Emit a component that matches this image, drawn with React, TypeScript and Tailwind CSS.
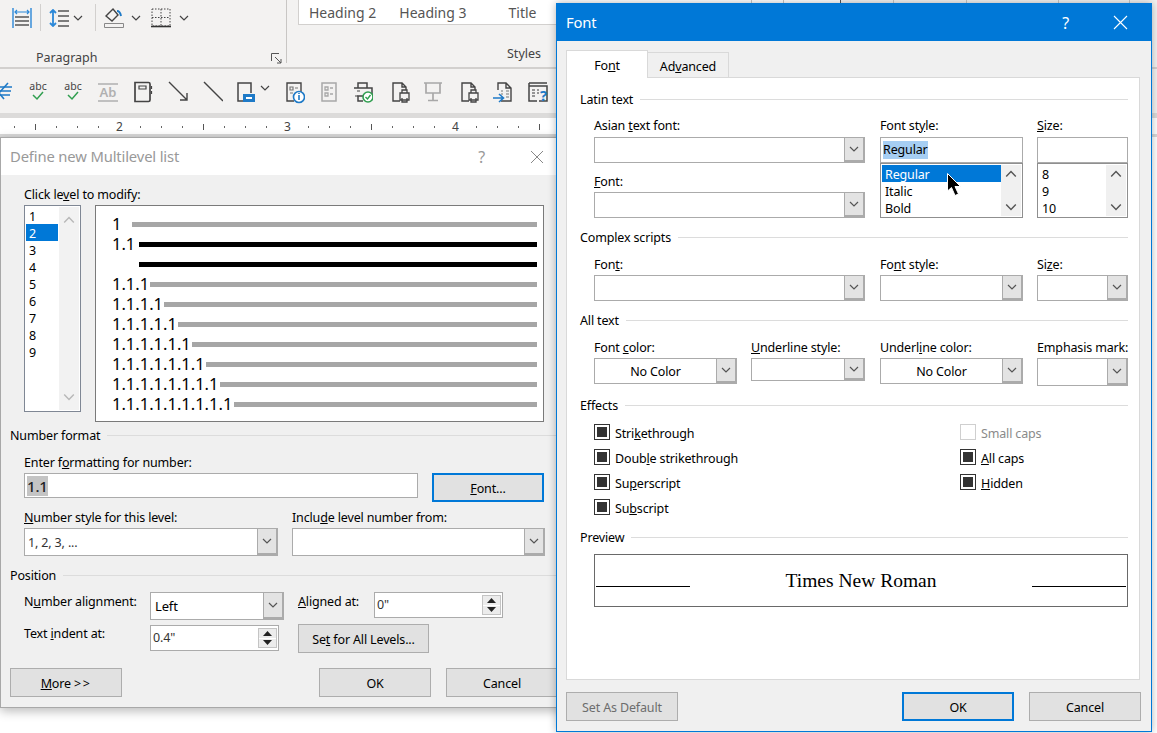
import type { ReactNode } from "react";

const Chevron = ({ up = false, color = "#555555", size = 10 }: { up?: boolean; color?: string; size?: number }) => (
  <svg width={size} height={size} viewBox="0 0 10 10" fill="none" stroke={color} strokeWidth="1.2">
    <polyline points={up ? "1,7 5,3 9,7" : "1,3 5,7 9,3"} />
  </svg>
);

function GroupTitle({ text, className = "" }: { text: string; className?: string }) {
  return (
    <div className={`flex h-[18px] items-center gap-[7px] ${className}`}>
      <span className="pt-[2px] leading-[18px]">{text}</span>
      <div className="h-px flex-1 bg-[#dcdcdc]" />
    </div>
  );
}

function Combo({ w, h = "h-[26px]", children }: { w: string; h?: string; children?: ReactNode }) {
  return (
    <div className={`flex ${w} ${h} shrink-0 border border-[#ababab] bg-white`}>
      <div className="flex min-w-0 flex-1 items-center">{children}</div>
      <div className="flex w-[20px] items-center justify-center border-b-2 border-l border-r border-[#ababab] bg-[#e3e3e3]">
        <Chevron />
      </div>
    </div>
  );
}

function Spin({ w, value }: { w: string; value: string }) {
  return (
    <div className={`flex ${w} h-[26px] shrink-0 border border-[#ababab] bg-white`}>
      <div className="flex flex-1 items-center pl-[2px] text-[12.5px] text-[#333]">{value}</div>
      <div className="my-[2px] mr-px flex w-[19px] flex-col gap-px border border-[#c4c4c4]">
        <div className="flex flex-1 items-center justify-center bg-[#ececec]">
          <svg width="9" height="5" viewBox="0 0 9 5"><polygon points="4.5,0 9,5 0,5" fill="#222" /></svg>
        </div>
        <div className="flex flex-1 items-center justify-center bg-[#ececec]">
          <svg width="9" height="5" viewBox="0 0 9 5"><polygon points="0,0 9,0 4.5,5" fill="#222" /></svg>
        </div>
      </div>
    </div>
  );
}

function Btn({ w, children, primary = false, disabled = false, className = "" }: {
  w: string;
  children: ReactNode;
  primary?: boolean;
  disabled?: boolean;
  className?: string;
}) {
  return (
    <div
      className={`flex ${w} h-[29px] shrink-0 items-center justify-center bg-[#e1e1e1] pt-[3px] text-[12.5px] ${
        primary ? "border-2 border-[#0078d7]" : "border border-[#adadad]"
      } ${disabled ? "text-[#6d6d6d]" : "text-black"} ${className}`}
    >
      <span>{children}</span>
    </div>
  );
}

function Check({ label, off = false }: { label: ReactNode; off?: boolean }) {
  return (
    <div className={`flex h-[25px] items-start gap-[5px] ${off ? "text-[#8a8a8a]" : ""}`}>
      <div className={`mt-[3px] flex h-[16px] w-[16px] items-center justify-center border bg-white ${off ? "border-[#cfcfcf]" : "border-[#333]"}`}>
        {!off && <div className="h-[10px] w-[10px] bg-[#333]" />}
      </div>
      <span className="text-[12.5px] leading-[25px]">{label}</span>
    </div>
  );
}

function ListBox({ w, rows, selected }: { w: string; rows: string[]; selected?: number }) {
  return (
    <div className={`flex ${w} h-[55px] shrink-0 border border-[#8f8f8f] bg-white`}>
      <div className="flex-1 pl-px pt-px">
        {rows.map((r, i) => (
          <div
            key={r}
            className={`h-[17px] pl-[3px] pt-[2px] text-[12.5px] leading-[15px] ${i === selected ? "bg-[#0078d7] text-white" : "text-black"}`}
          >
            {r}
          </div>
        ))}
      </div>
      <div className="my-px mr-px flex w-[20px] flex-col items-center justify-between bg-[#f0f0f0] py-[3px]">
        <Chevron up color="#555" size={12} />
        <Chevron color="#555" size={12} />
      </div>
    </div>
  );
}

const previewRows = [
  { num: "1", w: "w-[20px]", bar: "bg-[#a6a6a6]" },
  { num: "1.1", w: "w-[27px]", bar: "bg-black" },
  { num: "", w: "w-[27px]", bar: "bg-black" },
  { num: "1.1.1", w: "w-[38px]", bar: "bg-[#a6a6a6]" },
  { num: "1.1.1.1", w: "w-[52px]", bar: "bg-[#a6a6a6]" },
  { num: "1.1.1.1.1", w: "w-[66px]", bar: "bg-[#a6a6a6]" },
  { num: "1.1.1.1.1.1", w: "w-[80px]", bar: "bg-[#a6a6a6]" },
  { num: "1.1.1.1.1.1.1", w: "w-[94px]", bar: "bg-[#a6a6a6]" },
  { num: "1.1.1.1.1.1.1.1", w: "w-[108px]", bar: "bg-[#a6a6a6]" },
  { num: "1.1.1.1.1.1.1.1.1", w: "w-[122px]", bar: "bg-[#a6a6a6]" },
];

function DefineDialog() {
  return (
    <div className="absolute left-0 top-[137px] z-10 h-[571px] w-[575px] border border-[#a8a8a8] bg-[#f0f0f0] shadow-[0_3px_10px_rgba(0,0,0,0.28)]">
      <div className="flex h-[37px] items-center bg-white pl-[9px] pr-[26px] text-[14.8px] text-[#999]">
        <span className="flex-1">Define new Multilevel list</span>
        <span className="mr-[45px] text-[16px]">?</span>
        <svg width="14" height="14" viewBox="0 0 14 14" stroke="#888" strokeWidth="1" className="mr-[4px]">
          <path d="M1 1 13 13M13 1 1 13" />
        </svg>
      </div>

      <div className="pl-[23px]">
        <div className="mt-[12px] h-[16px] leading-[16px] text-[12.5px]">
          Click le<u>v</u>el to modify:
        </div>
        <div className="mt-[2px] flex items-start gap-[14px]">
          <div className="flex h-[207px] w-[57px] border border-[#7f8794] bg-white">
            <div className="w-[33px] pl-px pt-px">
              {["1", "2", "3", "4", "5", "6", "7", "8", "9"].map((n) => (
                <div
                  key={n}
                  className={`h-[17px] pl-[3px] pt-[3px] text-[12.5px] leading-[14px] ${n === "2" ? "bg-[#0078d7] text-white" : "text-black"}`}
                >
                  {n}
                </div>
              ))}
            </div>
            <div className="my-px ml-px flex w-[20px] flex-col items-center justify-between bg-[#f2f2f2] py-[7px]">
              <Chevron up color="#b8b8b8" size={12} />
              <Chevron color="#b8b8b8" size={12} />
            </div>
          </div>
          <div className="h-[217px] w-[449px] border border-[#7a7a7a] bg-white pl-[16px] pr-[6px] pt-[8px]">
            {previewRows.map((r, i) => (
              <div key={i} className="flex h-[20px] items-center">
                <span className={`${r.w} shrink-0 whitespace-nowrap text-[16.5px] leading-[20px] tracking-normal text-black`}>{r.num}</span>
                <div className={`h-[5px] flex-1 ${r.bar}`} />
              </div>
            ))}
          </div>
        </div>

        <GroupTitle text="Number format" className="-ml-[14px] mt-[4px] text-[12.5px]" />
        <div className="mt-[11px] h-[16px] leading-[16px] text-[12.5px]">
          Enter f<u>o</u>rmatting for number:
        </div>
        <div className="mt-[2px] flex items-start gap-[14px]">
          <div className="flex h-[25px] w-[394px] items-center border border-[#ababab] bg-white pl-[2px]">
            <span className="bg-[#c4c4c4] text-[15px] font-medium leading-[20px] text-[#222]">1.1</span>
          </div>
          <Btn w="w-[112px]" primary>
            <u>F</u>ont...
          </Btn>
        </div>
        <div className="mt-[8px] flex gap-[14px] text-[12.5px] leading-[16px]">
          <span className="w-[254px]"><u>N</u>umber style for this level:</span>
          <span>Inclu<u>d</u>e level number from:</span>
        </div>
        <div className="mt-[2px] flex gap-[14px]">
          <Combo w="w-[254px]" h="h-[28px]">
            <span className="pl-[3px] pt-[2px] text-[12.5px] text-[#333]">1, 2, 3, ...</span>
          </Combo>
          <Combo w="w-[253px]" h="h-[28px]" />
        </div>

        <GroupTitle text="Position" className="-ml-[14px] mt-[10px] text-[12.5px]" />
        <div className="mt-[8px] flex items-start">
          <span className="mt-[2px] w-[126px] text-[12.5px] leading-[16px]">N<u>u</u>mber alignment:</span>
          <Combo w="w-[134px]" h="h-[28px]">
            <span className="pl-[4px] pt-[2px] text-[13px]">Left</span>
          </Combo>
          <span className="ml-[14px] mt-[2px] w-[76px] text-[12.5px] leading-[16px]"><u>A</u>ligned at:</span>
          <Spin w="w-[129px]" value={'0"'} />
        </div>
        <div className="mt-[4px] flex items-start">
          <span className="mt-[2px] w-[126px] text-[12.5px] leading-[16px]">Text <u>i</u>ndent at:</span>
          <div className="mt-px">
            <Spin w="w-[129px]" value={'0.4"'} />
          </div>
          <Btn w="w-[131px]" className="ml-[19px]">
            Se<u>t</u> for All Levels...
          </Btn>
        </div>
        <div className="-ml-[14px] mt-[15px] flex">
          <Btn w="w-[112px]">
            <u>M</u>ore <span className="tracking-[1.5px]">&gt;&gt;</span>
          </Btn>
          <Btn w="w-[112px]" className="ml-[197px]">OK</Btn>
          <Btn w="w-[112px]" className="ml-[15px]">Cancel</Btn>
        </div>
      </div>
    </div>
  );
}

function FontDialog() {
  return (
    <div className="absolute left-[556px] top-[3px] z-20 h-[729px] w-[596px] border border-[#0078d7] bg-[#f0f0f0] shadow-[0_0_8px_rgba(0,0,0,0.3)]">
      <div className="flex h-[37px] items-center bg-[#0078d7] pl-[9px] pr-[23px] text-[14.8px] text-white">
        <span className="flex-1">Font</span>
        <span className="mr-[44px] text-[16px]">?</span>
        <svg width="15" height="15" viewBox="0 0 15 15" stroke="#fff" strokeWidth="1.1">
          <path d="M1 1 14 14M14 1 1 14" />
        </svg>
      </div>

      <div className="ml-[9px] mt-[8px] flex h-[28px] items-end text-[12.5px]">
        <div className="z-10 -mb-px flex h-[28px] w-[82px] items-center justify-center border border-b-0 border-[#d9d9d9] bg-white pt-[3px]">
          <span>Fo<u>n</u>t</span>
        </div>
        <div className="flex h-[25px] w-[81px] items-center justify-center border border-b-0 border-l-0 border-[#d9d9d9] bg-[#f0f0f0] pt-[4px]">
          <span>Ad<u>v</u>anced</span>
        </div>
      </div>

      <div className="ml-[9px] h-[603px] w-[574px] border border-[#d9d9d9] bg-white pl-[13px] pr-[11px] pt-[12px] text-[12.5px] leading-[16px]">
        <GroupTitle text="Latin text" />
        <div className="ml-[14px] mt-[10px] flex gap-[14px]">
          <div className="w-[272px]">
            <div>Asian <u>t</u>ext font:</div>
            <div className="mt-[3px]"><Combo w="w-[271px]" /></div>
            <div className="mt-[11px]"><u>F</u>ont:</div>
            <div className="mt-[2px]"><Combo w="w-[271px]" /></div>
          </div>
          <div className="w-[143px]">
            <div>Font st<u>y</u>le:</div>
            <div className="mt-[3px] flex h-[26px] items-center border border-[#ababab] bg-white pl-[2px]">
              <span className="bg-[#a6cef3] leading-[18px]">Regular</span>
            </div>
            <ListBox w="w-[143px]" rows={["Regular", "Italic", "Bold"]} selected={0} />
          </div>
          <div className="w-[91px]">
            <div><u>S</u>ize:</div>
            <div className="mt-[3px] h-[26px] border border-[#ababab] bg-white" />
            <ListBox w="w-[91px]" rows={["8", "9", "10"]} />
          </div>
        </div>

        <GroupTitle text="Complex scripts" className="mt-[10px]" />
        <div className="ml-[14px] mt-[11px] flex gap-[14px]">
          <div className="w-[272px]">
            <div>Fon<u>t</u>:</div>
            <div className="mt-[2px]"><Combo w="w-[271px]" /></div>
          </div>
          <div className="w-[143px]">
            <div>Fo<u>n</u>t style:</div>
            <div className="mt-[2px]"><Combo w="w-[143px]" /></div>
          </div>
          <div className="w-[91px]">
            <div>Si<u>z</u>e:</div>
            <div className="mt-[2px]"><Combo w="w-[91px]" /></div>
          </div>
        </div>

        <GroupTitle text="All text" className="mt-[10px]" />
        <div className="ml-[14px] mt-[11px] flex items-start gap-[14px]">
          <div className="w-[143px]">
            <div>Font <u>c</u>olor:</div>
            <div className="mt-[2px]">
              <Combo w="w-[143px]"><span className="w-full pt-[2px] text-center">No Color</span></Combo>
            </div>
          </div>
          <div className="w-[115px]">
            <div className="whitespace-nowrap"><u>U</u>nderline style:</div>
            <div className="mt-[2px]"><Combo w="w-[114px]" h="h-[23px]" /></div>
          </div>
          <div className="w-[143px]">
            <div className="whitespace-nowrap">Underl<u>i</u>ne color:</div>
            <div className="mt-[2px]">
              <Combo w="w-[143px]"><span className="w-full pt-[2px] text-center">No Color</span></Combo>
            </div>
          </div>
          <div className="w-[91px]">
            <div className="whitespace-nowrap">Emphasis mark:</div>
            <div className="mt-[2px]"><Combo w="w-[91px]" h="h-[28px]" /></div>
          </div>
        </div>

        <GroupTitle text="Effects" className="mt-[10px]" />
        <div className="ml-[14px] mt-[7px] flex">
          <div className="w-[366px]">
            <Check label={<>Stri<u>k</u>ethrough</>} />
            <Check label={<>Doub<u>l</u>e strikethrough</>} />
            <Check label={<>Su<u>p</u>erscript</>} />
            <Check label={<>Su<u>b</u>script</>} />
          </div>
          <div>
            <Check off label="Small caps" />
            <Check label={<><u>A</u>ll caps</>} />
            <Check label={<><u>H</u>idden</>} />
          </div>
        </div>

        <GroupTitle text="Preview" className="mt-[7px]" />
        <div className="ml-[14px] mt-[8px] flex h-[53px] items-center border border-[#696969] bg-white px-[1px]">
          <div className="mt-[11px] h-px w-[94px] bg-black" />
          <span className="flex-1 text-center font-['Liberation_Serif',serif] text-[19.5px] leading-[24px] tracking-normal text-black">Times New Roman</span>
          <div className="mt-[11px] h-px w-[94px] bg-black" />
        </div>
      </div>

      <div className="ml-[9px] mr-[10px] mt-[12px] flex">
        <Btn w="w-[112px]" disabled>Set As Default</Btn>
        <Btn w="w-[112px]" primary className="ml-auto">OK</Btn>
        <Btn w="w-[112px]" className="ml-[15px]">Cancel</Btn>
      </div>
    </div>
  );
}

const Svg = ({ className, children }: { className: string; children: ReactNode }) => (
  <svg width={20} height={24} viewBox="0 0 20 24" fill="none" className={`shrink-0 ${className}`}>
    {children}
  </svg>
);
const Dark = "#444444";
const Blue = "#1e7ac7";
const Abc = () => (
  <>
    <text x="10" y="10" textAnchor="middle" fontSize="10.5" fontFamily="Noto Sans" fill="#444">abc</text>
    <path d="M5 15 9 19 15 12" stroke="#2f9e4f" strokeWidth="1.5" />
  </>
);
const PrintDoc = () => (
  <>
    <path d="M10 21H3V3H12L16 7V10M12 3V7H16" stroke={Dark} strokeWidth="1.4" />
    <path d="M10 13H19V20H10ZM12 13V10H17V13M12 18V22H17V18" stroke={Dark} strokeWidth="1.3" fill="#f3f2f1" />
  </>
);

const toolbarIcons = [
  <Svg key="a" className="-ml-[8px]">
    <path d="M6 7 20 7M4 11 19 11M2 15 18 15" stroke={Blue} strokeWidth="1.6" />
    <path d="M16 3 7 13 12 19" stroke={Blue} strokeWidth="1.6" />
  </Svg>,
  <Svg key="b" className="ml-[16px]"><Abc /></Svg>,
  <Svg key="c" className="ml-[15px]"><Abc /></Svg>,
  <Svg key="d" className="ml-[15px]">
    <path d="M0 4H20M0 21H20" stroke="#b0b0b0" strokeWidth="1.4" />
    <text x="10" y="17" textAnchor="middle" fontSize="13" fontFamily="Noto Sans" fontWeight="600" fill="#b0b0b0">Ab</text>
  </Svg>,
  <Svg key="e" className="ml-[15px]">
    <path d="M2 2.500H15.500Q17 2.500 17 4V20Q17 21.500 15.500 21.500H2Z" stroke={Dark} strokeWidth="1.7" />
    <path d="M6 6H13V9H6Z" stroke={Dark} strokeWidth="1.2" />
    <path d="M18.500 6V9M18.500 11V14" stroke={Dark} strokeWidth="1.2" />
  </Svg>,
  <Svg key="f" className="ml-[15px]">
    <path d="M1 2 19 20M19 13V20H12" stroke={Dark} strokeWidth="1.4" />
  </Svg>,
  <Svg key="g" className="ml-[15px]">
    <path d="M1 2 20 21" stroke={Dark} strokeWidth="1.4" />
  </Svg>,
  <Svg key="h" className="ml-[13px]">
    <path d="M9 21H2V3H15V13" stroke={Dark} strokeWidth="1.5" />
    <path d="M7 14H19V22H7Z" fill={Blue} />
    <path d="M10 17H16V19H10Z" fill="#fff" />
  </Svg>,
  <div key="h2" className="ml-[4px] mb-[8px] shrink-0"><Chevron color="#444" /></div>,
  <Svg key="i" className="ml-[15px]">
    <path d="M9 21H2V3H16V12" stroke={Dark} strokeWidth="1.4" />
    <path d="M5 7H8V10H5ZM10 8H13M5 13H8" stroke="#777" strokeWidth="1.2" />
    <circle cx="14" cy="17" r="5.500" fill="#fff" stroke={Blue} strokeWidth="1.6" />
    <path d="M14 15V20M14 13V14" stroke={Blue} strokeWidth="1.6" />
  </Svg>,
  <Svg key="j" className="ml-[14px]">
    <path d="M3 3H17V21H3Z" stroke="#a8a8a8" strokeWidth="1.5" />
    <path d="M6 7H9V10H6ZM6 13H9V16H6ZM11 8H14M11 14H14" stroke="#a8a8a8" strokeWidth="1.3" />
  </Svg>,
  <Svg key="k" className="ml-[14px]">
    <path d="M5 8V3H14V8M1 8H19V16H5V21H10" stroke={Dark} strokeWidth="1.5" />
    <path d="M4 11H7M2 16H5" stroke={Dark} strokeWidth="1.2" />
    <circle cx="15" cy="17" r="5" fill="#fff" stroke="#2f9e4f" strokeWidth="1.6" />
    <path d="M12.500 17 14.500 19 17.500 15" stroke="#2f9e4f" strokeWidth="1.4" />
  </Svg>,
  <Svg key="l" className="ml-[17px]"><PrintDoc /></Svg>,
  <Svg key="m" className="ml-[13px]">
    <path d="M1 3H19M3 3V13H17V3M10 13V20M5 20.500H15" stroke="#a8a8a8" strokeWidth="1.7" />
  </Svg>,
  <Svg key="n" className="ml-[16px]"><PrintDoc /></Svg>,
  <Svg key="o" className="ml-[14px]">
    <path d="M5 10V3H13L18 8V21H8M13 3V8H18" stroke={Dark} strokeWidth="1.4" />
    <path d="M8 11H10M8 14H10M13 11H16M13 14H16M13 17H16" stroke="#777" strokeWidth="1.1" />
    <path d="M0 18H10M6 14 10.500 18 6 22" stroke={Blue} strokeWidth="1.6" />
  </Svg>,
  <Svg key="p" className="ml-[15px]">
    <path d="M1 3H19M1 6H19V21H11M1 3V21H9" stroke={Dark} strokeWidth="1.5" />
    <path d="M4 10H7M4 13H7M4 16H7M9 10H11M9 13H11" stroke="#777" strokeWidth="1.4" />
    <text x="15.500" y="21" textAnchor="middle" fontSize="15" fontWeight="700" fontFamily="Noto Sans" fill={Blue}>?</text>
  </Svg>,
];

const rulerTicks = Array.from({ length: 27 }, (_, k) => k);
const rulerNums: Record<number, string> = { 5: "2", 13: "3", 21: "4" };

function Ribbon() {
  return (
    <div className="h-[137px] bg-[#f3f2f1] tracking-normal">
      <div className="box-content flex h-[67px] border-b-2 border-[#d2d0ce]">
        <div className="h-[63px] w-[287px] shrink-0 border-r border-[#c8c6c4] pl-[12px] pt-[4px]">
          <div className="flex h-[27px] items-center">
            <svg width="20" height="20" viewBox="0 0 20 20" fill="none">
              <path d="M1 0V20M19 0V20" stroke="#2b88d8" strokeWidth="1.4" />
              <path d="M3 4H17M5 2 3 4 5 6M15 2 17 4 15 6" stroke="#2b88d8" strokeWidth="1.2" />
              <path d="M3 9H17M3 13H17M3 17H17" stroke="#555" strokeWidth="1.6" />
            </svg>
            <div className="ml-[8px] h-[27px] w-px bg-[#d2d0ce]" />
            <svg width="20" height="18" viewBox="0 0 20 18" fill="none" className="ml-[8px]">
              <path d="M4 1V17M1 4 4 1 7 4M1 14 4 17 7 14" stroke="#2b88d8" strokeWidth="1.8" />
              <path d="M9 2H20M9 7H20M9 12H20M9 17H20" stroke="#555" strokeWidth="1.5" />
            </svg>
            <div className="ml-[4px]"><Chevron color="#444" /></div>
            <div className="ml-[12px] h-[27px] w-px bg-[#d2d0ce]" />
            <svg width="20" height="20" viewBox="0 0 20 20" fill="none" className="ml-[8px]">
              <path d="M2 8 9 1 14 7 8 13Z" stroke="#444" strokeWidth="1.4" />
              <path d="M13 3Q16 3 17 8" stroke="#1e7ac7" strokeWidth="2" />
              <path d="M0.500 15.500H19.500V19.500H0.500Z" stroke="#888" strokeWidth="1" />
            </svg>
            <div className="ml-[7px]"><Chevron color="#444" /></div>
            <svg width="20" height="20" viewBox="0 0 20 20" fill="none" className="ml-[10px]">
              <path d="M1 1H19V18H1ZM10 1V18M1 9.500H19" stroke="#444" strokeWidth="1" strokeDasharray="1.500 1.500" />
              <path d="M0 18.500H20" stroke="#333" strokeWidth="1.600" />
            </svg>
            <div className="ml-[8px]"><Chevron color="#444" /></div>
          </div>
          <div className="mt-[19px] flex items-center text-[12.5px] leading-[16px] text-[#444]">
            <span className="ml-[24px] flex-1">Paragraph</span>
            <svg width="11" height="11" viewBox="0 0 11 11" fill="none" stroke="#555" className="mr-[4px]">
              <path d="M0.500 8V0.500H8M4 4 10 10M10 6V10H6" />
            </svg>
          </div>
        </div>
        <div className="w-[11px] shrink-0" />
        <div className="flex h-[62px] w-[453px] shrink-0 flex-col">
          <div className="flex h-[29px] items-center border-b border-l border-[#d2d0ce] bg-white text-[14px] text-[#555]">
            <span className="ml-[10px]">Heading 2</span>
            <span className="ml-[23px]">Heading 3</span>
            <span className="ml-[42px]">Title</span>
          </div>
          <div className="mt-[21px] pl-[209px] text-[12.5px] leading-[16px] text-[#444]">Styles</div>
        </div>
        <div className="h-[29px] w-[32px] border-l border-[#c8c6c4] bg-white" />
        <div className="h-[29px] w-[57px] border-l border-[#c8c6c4] bg-white" />
        <div className="h-[29px] w-[53px] border-l border-[#555]" />
        <div className="h-[29px] w-[73px] border-l border-[#c8c6c4]" />
        <div className="h-[29px] w-[92px] border-l border-[#c8c6c4]" />
        <div className="h-[29px] w-[71px] border-l border-[#c8c6c4]" />
        <div className="h-[29px] flex-1 border-l border-[#c8c6c4]" />
      </div>
      <div className="flex h-[44px] items-center overflow-hidden pt-[2px]">{toolbarIcons}</div>
      <div className="h-[5px] bg-[#dcdbda]" />
      <div className="flex h-[16px] items-center bg-white pl-[4px] pt-px text-[12px] leading-[16px] text-[#444]">
        {rulerTicks.map((k) => (
          <div key={k} className="flex w-[21px] shrink-0 items-center justify-center">
            {rulerNums[k] ? (
              <span>{rulerNums[k]}</span>
            ) : k % 8 === 1 ? (
              <div className="h-[6px] w-px bg-[#555]" />
            ) : (
              <div className="h-[2px] w-px bg-[#666]" />
            )}
          </div>
        ))}
      </div>
      <div className="h-[3px] bg-[#d8d8d8]" />
    </div>
  );
}

export default function App() {
  return (
    <div className="relative h-[733px] w-[1157px] overflow-hidden bg-white font-['Noto_Sans',sans-serif] text-[12.5px] tracking-[-0.15px] text-black">
      <Ribbon />
      <DefineDialog />
      <FontDialog />
      <svg width="16" height="25" viewBox="0 0 16 25" className="absolute left-[946px] top-[172px] z-30">
        <path d="M1.500 1.500V19L5.500 15.500 9 23.500 12.500 22 9 14.500H14.500Z" fill="#000" stroke="#fff" strokeWidth="1" />
      </svg>
    </div>
  );
}
